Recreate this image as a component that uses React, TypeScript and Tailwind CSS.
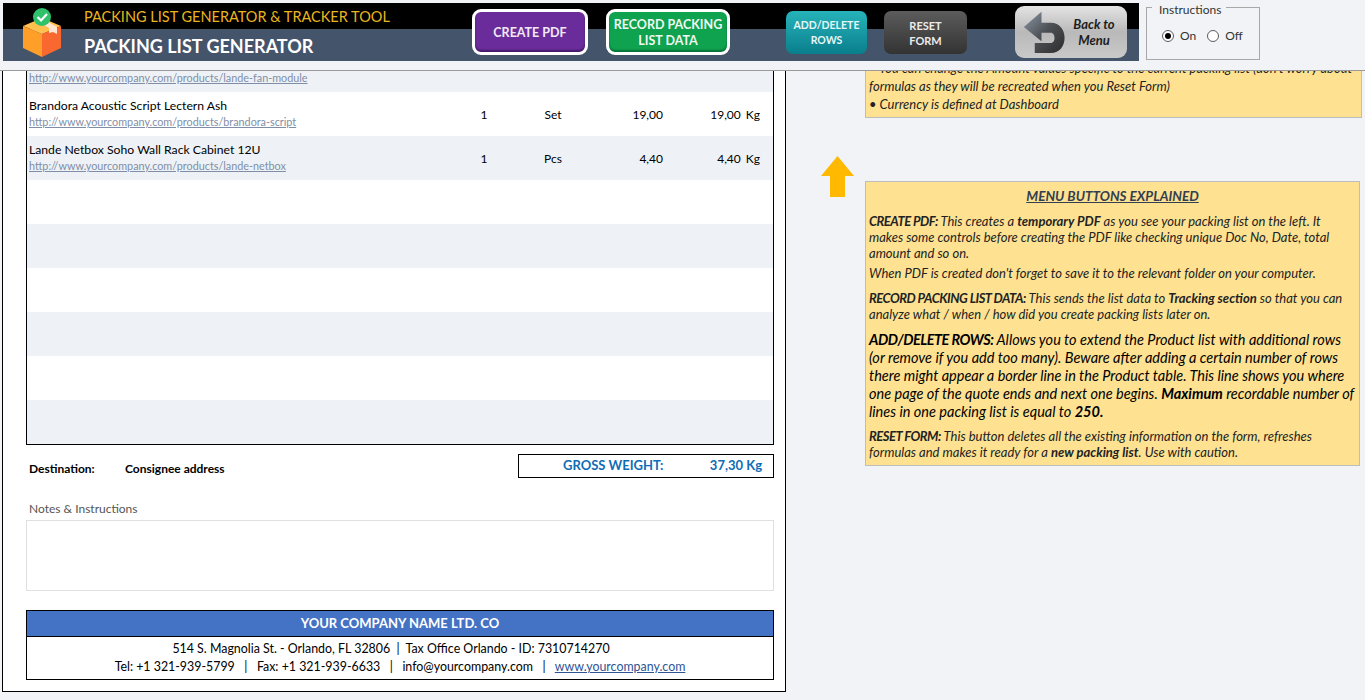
import type { ReactNode } from 'react'

const products = [
  { band: true, short: true, name: '', url: 'http://www.yourcompany.com/products/lande-fan-module', qty: '1', unit: 'Pcs', price: '9,10', total: '9,10' },
  { band: false, short: false, name: 'Brandora Acoustic Script Lectern Ash', url: 'http://www.yourcompany.com/products/brandora-script', qty: '1', unit: 'Set', price: '19,00', total: '19,00' },
  { band: true, short: false, name: 'Lande Netbox Soho Wall Rack Cabinet 12U', url: 'http://www.yourcompany.com/products/lande-netbox', qty: '1', unit: 'Pcs', price: '4,40', total: '4,40' },
]

const emptyRows = [false, true, false, true, false, true]

function BoxLogo() {
  return (
    <svg width="42" height="52" viewBox="0 0 42 52" className="shrink-0">
      <path d="M1 20 L20 12 L39 20 L20 28 Z" fill="#ffc04d" />
      <path d="M1 20 L20 28 L20 51 L1 42 Z" fill="#ff9f2a" />
      <path d="M20 28 L39 20 L39 42 L20 51 Z" fill="#f9682f" />
      <path d="M26 16 L35 21 L35 28 L31 26 L27 27 L27 22 L20 18 Z" fill="#ffe6d0" />
      <circle cx="20" cy="11" r="9" fill="#2fc26b" />
      <path d="M15.5 11 L19 14.5 L25 8" fill="none" stroke="#fff" strokeWidth="2.2" />
    </svg>
  )
}

function BackArrow() {
  return (
    <svg width="42" height="42" viewBox="0 0 50 50" className="shrink-0">
      <defs>
        <linearGradient id="backFill" x1="0" y1="0" x2="1" y2="1">
          <stop offset="0" stopColor="#8c99a8" />
          <stop offset="0.5" stopColor="#4d5054" />
          <stop offset="1" stopColor="#2c2c2c" />
        </linearGradient>
      </defs>
      <path d="M22 1 L1 19 L22 36 L22 26 L33 26 C39 26 39 38 33 38 L14 38 L14 50 L33 50 C55 50 55 14 33 14 L22 14 Z" fill="url(#backFill)" />
    </svg>
  )
}

function Radio({ label, checked }: { label: string; checked?: boolean }) {
  return (
    <span className="flex items-center gap-[6px]">
      <span className="flex h-[12px] w-[12px] items-center justify-center rounded-full border border-[#5b5b5b] bg-white">
        {checked && <span className="h-[6px] w-[6px] rounded-full bg-black" />}
      </span>
      {label}
    </span>
  )
}

function Line({ children, className = '' }: { children: ReactNode; className?: string }) {
  return <div className={`whitespace-nowrap ${className}`}>{children}</div>
}

function Label({ children }: { children: ReactNode }) {
  return <b className="tracking-[-0.5px]">{children}</b>
}

export default function App() {
  return (
    <div className="flex h-[700px] w-[1365px] flex-col overflow-hidden bg-[#f1f3f6] font-['Lato','Liberation_Sans',sans-serif] text-black">
      <header className="relative z-10 flex h-[71px] shrink-0 border-b border-[#9a9a9a] bg-[#f1f3f6] pt-[3px] pl-[3px]">
        <div className="relative flex h-[58px] w-[1136px] items-center">
          <div className="absolute inset-0 flex flex-col">
            <div className="h-[26px] bg-black" />
            <div className="flex-1 bg-[#44546a]" />
          </div>
          <div className="relative ml-[19px]"><BoxLogo /></div>
          <div className="relative ml-[20px] flex h-full w-[388px] shrink-0 flex-col">
            <div className="flex h-[26px] items-center pt-[2px] text-[14.5px] leading-none whitespace-nowrap text-[#eab51f]">PACKING LIST GENERATOR &amp; TRACKER TOOL</div>
            <div className="flex flex-1 items-center pt-[2px] text-[18px] leading-none font-bold whitespace-nowrap text-white">PACKING LIST GENERATOR</div>
          </div>
          <div className="relative flex h-[46px] w-[116px] shrink-0 items-center justify-center rounded-[9px] border-[3px] border-white bg-[#6a2c9a] pt-[2px] text-[12.5px] font-bold text-[#f1e9f7] shadow-[inset_0_-2px_2px_#43186a]">CREATE PDF</div>
          <div className="relative ml-[18px] flex h-[46px] w-[124px] shrink-0 items-center justify-center rounded-[9px] border-[3px] border-white bg-[#0fa34f] pt-[2px] text-center text-[12.5px] leading-[16px] font-bold text-[#eef9f2] shadow-[inset_0_-2px_2px_#08703a]">RECORD PACKING<br />LIST DATA</div>
          <div className="relative ml-[56px] flex h-[43px] w-[81px] shrink-0 items-center justify-center rounded-[7px] bg-gradient-to-b from-[#26b3ba] to-[#087f8c] pt-[2px] text-center text-[10.5px] leading-[15px] font-bold text-[#e6f7f8]">ADD/DELETE<br />ROWS</div>
          <div className="relative ml-[17px] flex h-[43px] w-[83px] shrink-0 items-center justify-center rounded-[7px] bg-gradient-to-b from-[#5c5c5c] to-[#333333] pt-[2px] text-center text-[11px] leading-[15px] font-bold text-[#ececec]">RESET<br />FORM</div>
          <div className="relative ml-[48px] flex h-[52px] w-[112px] shrink-0 items-center rounded-[9px] bg-gradient-to-b from-[#e4e4e4] via-[#b9b9b9] to-[#c9c9c9] pl-[8px]">
            <BackArrow />
            <div className="w-[58px] text-center text-[13px] leading-[16px] font-bold text-[#1d1d1d] italic">Back to<br />Menu</div>
          </div>
        </div>
        <div className="relative mt-[4px] ml-[7px] h-[53px] w-[114px] border border-[#a8a8a8] pt-[21px] pl-[15px]">
          <span className="absolute top-[-4px] left-[5px] h-[12px] w-[74px] bg-[#f1f3f6] pl-[7px] text-[12px] leading-[12px] text-[#333333]">Instructions</span>
          <div className="flex gap-[11px] text-[12px] leading-[14px] text-[#333333]">
            <Radio label="On" checked />
            <Radio label="Off" />
          </div>
        </div>
      </header>

      <main className="flex min-h-0 flex-1">
        <section className="ml-[2px] h-[621px] w-[784px] shrink-0 border-x border-b border-black bg-white pr-[11px] pl-[23px]">
          <div className="border-x border-b border-black">
            {products.map((p) => (
              <div key={p.url} className={`grid grid-cols-[424px_66px_72px_74px_1fr] text-[12px] ${p.short ? 'h-[21px] items-start' : 'h-[44px] items-center'} ${p.band ? 'bg-[#eef2f6]' : 'bg-white'}`}>
                <div className={`pl-[2px] ${p.short ? '' : 'pb-[2px]'}`}>
                  {p.name && <div className="text-[12.2px] leading-[18px] whitespace-nowrap">{p.name}</div>}
                  <div className="text-[10.8px] leading-[14px] whitespace-nowrap text-[#7f8ea6] underline">{p.url}</div>
                </div>
                {p.short ? null : <div className="pt-[2px] text-center">{p.qty}</div>}
                {p.short ? null : <div className="pt-[2px] text-center">{p.unit}</div>}
                {p.short ? null : <div className="pt-[2px] text-right">{p.price}</div>}
                {p.short ? null : <div className="flex justify-end gap-[5px] pt-[2px] pr-[13px]"><span>{p.total}</span><span>Kg</span></div>}
              </div>
            ))}
            {emptyRows.map((band, i) => (
              <div key={i} className={`h-[44px] ${band ? 'bg-[#eef2f6]' : 'bg-white'}`} />
            ))}
          </div>

          <div className="mt-[9px] flex h-[24px] items-start justify-between">
            <div className="flex h-full translate-y-[3px] items-center pl-[3px] text-[12px] font-bold">
              <span className="w-[96px]">Destination:</span>
              <span>Consignee address</span>
            </div>
            <div className="flex h-[24px] w-[256px] items-center border border-black pr-[11px] pl-[44px] text-[13px] font-bold text-[#0f6cb5]">
              <span className="flex-1">GROSS WEIGHT:</span>
              <span>37,30 Kg</span>
            </div>
          </div>

          <div className="mt-[23px] pl-[3px] text-[12px] leading-[16px] text-[#555555]">Notes &amp; Instructions</div>
          <div className="mt-[3px] h-[71px] border border-[#e0e0e0]" />

          <div className="mt-[19px] border border-black">
            <div className="flex h-[26px] items-center justify-center border-b border-black bg-[#4472c4] text-[13px] font-bold text-white">YOUR COMPANY NAME LTD. CO</div>
            <div className="flex h-[42px] flex-col items-center justify-center text-[12.4px] leading-[18px]">
              <Line className="mr-[18px]">514 S. Magnolia St. - Orlando, FL 32806&nbsp; |&nbsp; Tax Office Orlando - ID: 7310714270</Line>
              <Line>Tel: +1 321-939-5799 &nbsp; | &nbsp; Fax: +1 321-939-6633 &nbsp; | &nbsp; info@yourcompany.com &nbsp; | &nbsp; <span className="text-[#2f5496] underline">www.yourcompany.com</span></Line>
            </div>
          </div>
        </section>

        <section className="flex shrink-0 flex-col pl-[35px]">
          <div className="-mt-[13px] ml-[44px] h-[60px] w-[497px] border border-[#bdbdbd] bg-[#fee292] px-[3px] text-[13px] leading-[18px] text-[#222222] italic">
            <Line>• You can change the Amount values specific to the current packing list (don't worry about</Line>
            <Line>formulas as they will be recreated when you Reset Form)</Line>
            <Line>• Currency is defined at Dashboard</Line>
          </div>
          <div className="flex items-start">
            <svg width="33" height="41" viewBox="0 0 33 41" className="mt-[38px] shrink-0">
              <path d="M16.5 0 L33 20 L24 20 L24 41 L9 41 L9 20 L0 20 Z" fill="#ffb900" />
            </svg>
            <div className="mt-[63px] ml-[11px] h-[285px] w-[495px] border border-[#bdbdbd] bg-[#fee292] px-[3px] pt-[5px] text-[#222222] italic">
              <Line className="text-center text-[13.5px] leading-[18px] font-bold text-[#333f50] underline">MENU BUTTONS EXPLAINED</Line>
              <div className="mt-[8px] text-[13px] leading-[16px]">
                <Line><Label>CREATE PDF:</Label> This creates a <b>temporary PDF</b> as you see your packing list on the left. It</Line>
                <Line>makes some controls before creating the PDF like checking unique Doc No, Date, total</Line>
                <Line>amount and so on.</Line>
                <Line className="mt-[4px]">When PDF is created don't forget to save it to the relevant folder on your computer.</Line>
                <Line className="mt-[9px]"><Label>RECORD PACKING LIST DATA:</Label> This sends the list data to <b>Tracking section</b> so that you can</Line>
                <Line>analyze what / when / how did you create packing lists later on.</Line>
              </div>
              <div className="mt-[9px] text-[14.5px] leading-[18px] text-black">
                <Line><Label>ADD/DELETE ROWS:</Label> Allows you to extend the Product list with additional rows</Line>
                <Line>(or remove if you add too many). Beware after adding a certain number of rows</Line>
                <Line>there might appear a border line in the Product table. This line shows you where</Line>
                <Line>one page of the quote ends and next one begins. <b>Maximum</b> recordable number of</Line>
                <Line>lines in one packing list is equal to <b>250.</b></Line>
              </div>
              <div className="mt-[7px] text-[13px] leading-[16px]">
                <Line><Label>RESET FORM:</Label> This button deletes all the existing information on the form, refreshes</Line>
                <Line>formulas and makes it ready for a <b>new packing list</b>. Use with caution.</Line>
              </div>
            </div>
          </div>
        </section>
      </main>
    </div>
  )
}
